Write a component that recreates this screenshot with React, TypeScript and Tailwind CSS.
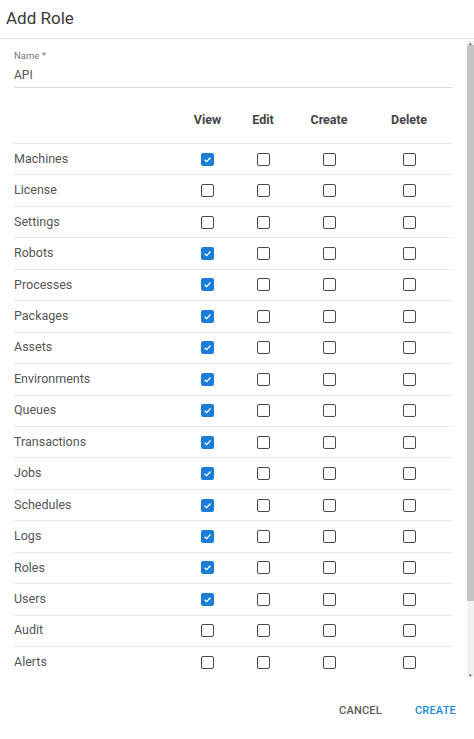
import React, { useState } from 'react';

const rows: { name: string; view: boolean }[] = [
    { name: 'Machines', view: true },
    { name: 'License', view: false },
    { name: 'Settings', view: false },
    { name: 'Robots', view: true },
    { name: 'Processes', view: true },
    { name: 'Packages', view: true },
    { name: 'Assets', view: true },
    { name: 'Environments', view: true },
    { name: 'Queues', view: true },
    { name: 'Transactions', view: true },
    { name: 'Jobs', view: true },
    { name: 'Schedules', view: true },
    { name: 'Logs', view: true },
    { name: 'Roles', view: true },
    { name: 'Users', view: true },
    { name: 'Audit', view: false },
    { name: 'Alerts', view: false },
];

function Box({ checked, onClick }: { checked: boolean; onClick: () => void }) {
    return (
        <button onClick={onClick} className="flex items-center justify-center">
            {checked ? (
                <span className="w-[13px] h-[13px] rounded-[2px] bg-[#1a7fd4] flex items-center justify-center">
                    <svg width="9" height="9" viewBox="0 0 10 10">
                        <path d="M1.8 5.2 L4.1 7.4 L8.3 2.8" fill="none" stroke="white" strokeWidth="1.4" />
                    </svg>
                </span>
            ) : (
                <span className="w-[13px] h-[13px] rounded-[2px] border-[1.6px] border-[#4a4a4a] bg-white" />
            )}
        </button>
    );
}

export default function App() {
    const [perms, setPerms] = useState(
        rows.map(r => ({ name: r.name, v: [r.view, false, false, false] }))
    );

    const toggle = (i: number, j: number) => {
        setPerms(prev => prev.map((p, idx) => (idx === i ? { ...p, v: p.v.map((x, k) => (k === j ? !x : x)) } : p)));
    };

    return (
        <div className="w-[474px] h-[739px] bg-white flex flex-col font-['Roboto',sans-serif] text-[#4d4d4d]">
            <div className="h-[39px] shrink-0 border-b border-[#e3e3e3] pl-[6px] flex items-center">
                <h2 className="text-[17px] text-[#3a3a3a]">Add Role</h2>
            </div>

            <div className="flex h-[646px]">
                <div className="flex-1 pl-[14px] pr-[14px]">
                    <div className="pt-[11px] w-[438px]">
                        <p className="text-[9.5px] text-[#777] leading-[12px]">Name *</p>
                        <p className="text-[12px] text-[#555] mt-[5px] leading-[16px]">API</p>
                        <div className="mt-[4px] border-b border-[#d9d9d9]" />
                    </div>

                    <div className="w-[438px] mt-[14px]">
                        <div className="grid grid-cols-[166px_54px_58px_74px_86px] items-start pt-[10px] h-[42px] border-b border-[#e6e6e6] text-[12.5px] leading-[16px] font-bold text-[#444]">
                            <span />
                            <span className="text-center pl-[1px]">View</span>
                            <span className="text-center">Edit</span>
                            <span className="text-center">Create</span>
                            <span className="text-center">Delete</span>
                        </div>
                        {perms.map((p, i) => (
                            <div
                                key={p.name}
                                className={`grid grid-cols-[166px_54px_58px_74px_86px] items-center h-[31.44px] text-[12.5px] ${i < perms.length - 1 ? 'border-b border-[#e8e8e8]' : ''}`}
                            >
                                <span className="text-[#555]">{p.name}</span>
                                {p.v.map((c, j) => (
                                    <div key={j} className="flex justify-center pl-[1px]">
                                        <Box checked={c} onClick={() => toggle(i, j)} />
                                    </div>
                                ))}
                            </div>
                        ))}
                    </div>
                </div>

                {/* scrollbar */}
                <div className="w-[7px] mt-[2px] h-[636px] bg-[#f1f1f1] flex flex-col items-center">
                    <div className="h-[4px] text-[5px] leading-[4px] text-[#555]">▴</div>
                    <div className="w-[7px] h-[556px] bg-[#c4c4c4]" />
                    <div className="flex-1" />
                    <div className="h-[4px] text-[5px] leading-[4px] text-[#555]">▾</div>
                </div>
            </div>

            <div className="flex-1 flex items-center justify-end gap-[33px] pr-[18px] pb-[2px] text-[11px] font-medium tracking-[0.2px]">
                <button className="text-[#5a5a5a]">CANCEL</button>
                <button className="text-[#1c8ad6]">CREATE</button>
            </div>
        </div>
    );
}
